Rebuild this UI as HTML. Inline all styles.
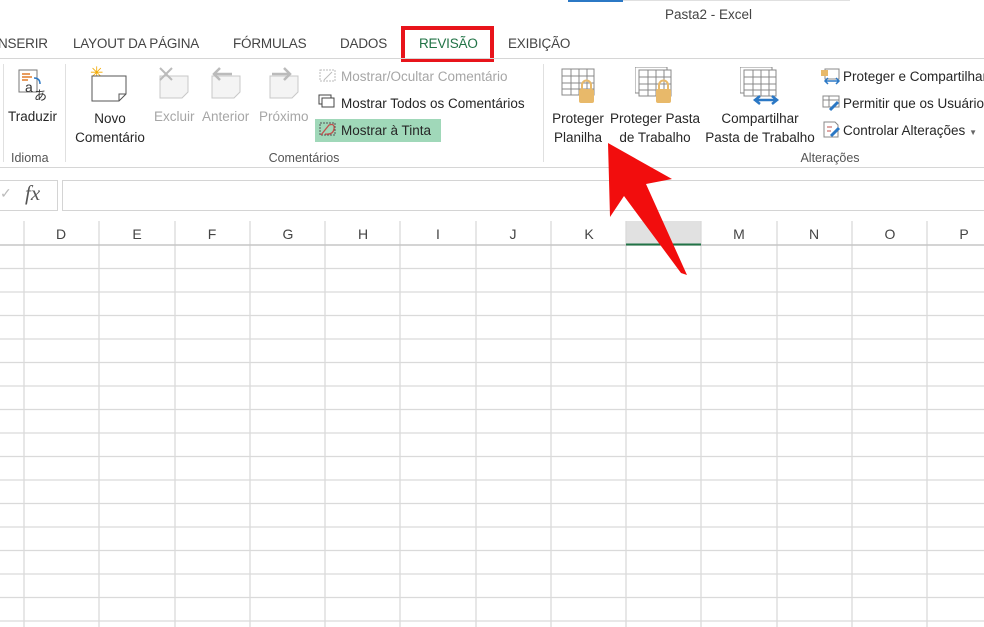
<!DOCTYPE html>
<html><head><meta charset="utf-8"><style>
body{margin:0;width:984px;height:627px;overflow:hidden;background:#fff;font-family:"Liberation Sans",sans-serif;position:relative;color:#262626}
.a{position:absolute;white-space:nowrap}
.t{font-size:13.5px;top:36px;color:#444;letter-spacing:-0.2px}
.r{font-size:13.5px}
.c{text-align:center}
.g{color:#a6a6a6}
.clip{position:absolute;left:0;top:0;width:984px;height:627px;overflow:hidden}
</style></head><body><div class="clip">
<div class="a" style="left:568px;top:0;width:55px;height:2px;background:#2b78c5"></div>
<div class="a" style="left:623px;top:0;width:227px;height:1px;background:#e0e0e0"></div>
<div class="a" style="left:665px;top:7px;font-size:13.5px;color:#444">Pasta2 - Excel</div>

<div class="a t" style="left:-2px">NSERIR</div>
<div class="a t" style="left:73px">LAYOUT DA PÁGINA</div>
<div class="a t" style="left:233px">FÓRMULAS</div>
<div class="a t" style="left:340px">DADOS</div>
<div class="a t" style="left:419px;color:#217346">REVISÃO</div>
<div class="a t" style="left:508px">EXIBIÇÃO</div>
<div class="a" style="left:401px;top:26px;width:85px;height:28px;border:4px solid #e8141b"></div>
<div class="a" style="left:0;top:58px;width:984px;height:1px;background:#d6d6d6"></div>
<div class="a" style="left:0;top:167px;width:984px;height:1px;background:#d6d6d6"></div>
<div class="a" style="left:65px;top:64px;width:1px;height:98px;background:#e0e0e0"></div>
<div class="a" style="left:543px;top:64px;width:1px;height:98px;background:#e0e0e0"></div>
<div class="a" style="left:3px;top:64px;width:1px;height:98px;background:#e0e0e0"></div>

<svg class="a" style="left:16px;top:68px" width="36" height="36"><rect x="3" y="2" width="18" height="22" fill="#fff" stroke="#777"/><path d="M6 6h8M6 9h10M6 12h6" stroke="#e07b2a" stroke-width="1.5"/><path d="M18 10q6 0 6 6" stroke="#2b78c5" fill="none" stroke-width="1.5"/><text x="9" y="24" font-size="14" fill="#333" font-family="Liberation Sans">a</text><text x="18" y="32" font-size="13" fill="#333" font-family="Noto Sans CJK JP">あ</text></svg>
<div class="a r" style="left:8px;top:109px">Traduzir</div>
<div class="a r" style="left:11px;top:151px;color:#555;font-size:12.5px">Idioma</div>

<svg class="a" style="left:88px;top:64px" width="44" height="40"><text x="2" y="14" font-size="16" fill="#f2a900">✳</text><path d="M4 12h34v18l-7 7H4z" fill="#fff" stroke="#555"/><path d="M31 37v-7h7" fill="none" stroke="#555"/></svg>
<div class="a r c" style="left:70px;top:109px;width:80px;line-height:19px">Novo<br>Comentário</div>
<svg class="a" style="left:156px;top:66px" width="36" height="36"><path d="M4 10h28v16l-6 6H4z" fill="#f4f4f4" stroke="#c8c8c8"/><path d="M4 2l12 12M16 2L4 14" stroke="#bbb" stroke-width="2"/></svg>
<svg class="a" style="left:208px;top:66px" width="36" height="36"><path d="M4 10h28v16l-6 6H4z" fill="#f4f4f4" stroke="#c8c8c8"/><path d="M24 8H6M12 2L6 8l6 6" fill="none" stroke="#bbb" stroke-width="2.5"/></svg>
<svg class="a" style="left:266px;top:66px" width="36" height="36"><path d="M4 10h28v16l-6 6H4z" fill="#f4f4f4" stroke="#c8c8c8"/><path d="M6 8h18M18 2l6 6-6 6" fill="none" stroke="#bbb" stroke-width="2.5"/></svg>
<div class="a r g" style="left:154px;top:109px">Excluir</div>
<div class="a r g" style="left:202px;top:109px">Anterior</div>
<div class="a r g" style="left:259px;top:109px">Próximo</div>

<div class="a" style="left:315px;top:119px;width:126px;height:23px;background:#a0d8b9"></div>
<svg class="a" style="left:318px;top:68px" width="20" height="72"><rect x="2" y="2" width="15" height="11" fill="none" stroke="#bbb" stroke-dasharray="2 1"/><path d="M6 12l8-8" stroke="#bbb"/><rect x="1" y="27" width="12" height="9" fill="none" stroke="#444"/><rect x="4" y="30" width="12" height="9" fill="#fff" stroke="#444"/><rect x="2" y="55" width="15" height="12" fill="none" stroke="#555" stroke-dasharray="2 1"/><path d="M3 67l8-10q6-2 5 4t-9 5" fill="none" stroke="#c0504d" stroke-width="1.3"/></svg>
<div class="a r g" style="left:341px;top:69px">Mostrar/Ocultar Comentário</div>
<div class="a r" style="left:341px;top:96px">Mostrar Todos os Comentários</div>
<div class="a r" style="left:341px;top:123px">Mostrar à Tinta</div>
<div class="a c" style="left:254px;top:151px;width:100px;font-size:12.5px;color:#555">Comentários</div>

<svg class="a" style="left:560px;top:67px" width="40" height="40"><g fill="none" stroke="#888"><rect x="2" y="2" width="32" height="26"/><path d="M2 9h32M2 16h32M2 22h32M11 2v26M19 2v26M27 2v26"/></g><rect x="19" y="22" width="15" height="14" rx="2" fill="#e8b96a"/><path d="M22 22v-4a4.5 4.5 0 0 1 9 0v4" fill="none" stroke="#e8b96a" stroke-width="2"/></svg>
<svg class="a" style="left:635px;top:67px" width="40" height="40"><rect x="0" y="0" width="32" height="26" fill="none" stroke="#888"/><g fill="#fff" stroke="#888"><rect x="4" y="3" width="32" height="26"/></g><path d="M4 10h32M4 17h32M4 23h32M13 3v26M21 3v26M29 3v26" stroke="#888" fill="none"/><rect x="21" y="22" width="15" height="14" rx="2" fill="#e8b96a"/><path d="M24 22v-4a4.5 4.5 0 0 1 9 0v4" fill="none" stroke="#e8b96a" stroke-width="2"/></svg>
<svg class="a" style="left:740px;top:67px" width="42" height="40"><rect x="0" y="0" width="32" height="26" fill="none" stroke="#888"/><rect x="4" y="3" width="32" height="26" fill="#fff" stroke="#888"/><path d="M4 10h32M4 17h32M4 23h32M13 3v26M21 3v26M29 3v26" stroke="#888" fill="none"/><path d="M16 33h20M20 29l-5 4 5 4M32 29l5 4-5 4" fill="none" stroke="#2b78c5" stroke-width="2.5"/></svg>
<div class="a r c" style="left:543px;top:109px;width:70px;line-height:19px">Proteger<br>Planilha</div>
<div class="a r c" style="left:607px;top:109px;width:96px;line-height:19px">Proteger Pasta<br>de Trabalho</div>
<div class="a r c" style="left:702px;top:109px;width:116px;line-height:19px">Compartilhar<br>Pasta de Trabalho</div>
<svg class="a" style="left:820px;top:66px" width="22" height="74"><rect x="5" y="3" width="14" height="10" fill="none" stroke="#888"/><rect x="1" y="4" width="7" height="6" fill="#e8b96a"/><path d="M5 15h14M8 12l-3 3 3 3M16 12l3 3-3 3" stroke="#2b78c5" fill="none" stroke-width="1.5"/><rect x="3" y="30" width="16" height="11" fill="none" stroke="#888"/><path d="M3 34h16M9 30v11" stroke="#888"/><path d="M10 44l8-8" stroke="#2b78c5" stroke-width="3"/><path d="M4 56h11l3 3v12H4z" fill="none" stroke="#888"/><path d="M7 61h5M7 65h4" stroke="#c0504d"/><path d="M11 70l8-8" stroke="#2b78c5" stroke-width="3"/></svg>
<div class="a r" style="left:843px;top:69px">Proteger e Compartilhar</div>
<div class="a r" style="left:843px;top:96px">Permitir que os Usuários</div>
<div class="a r" style="left:843px;top:123px">Controlar Alterações <span style="font-size:8px;color:#666">▼</span></div>
<div class="a c" style="left:780px;top:151px;width:100px;font-size:12.5px;color:#555">Alterações</div>

<div class="a" style="left:-2px;top:180px;width:58px;height:29px;border:1px solid #d4d4d4"></div>
<div class="a" style="left:0;top:185px;color:#bbb;font-size:14px">✓</div>
<div class="a" style="left:25px;top:181px;font-family:'Liberation Serif',serif;font-style:italic;font-size:21px;color:#555">fx</div>
<div class="a" style="left:62px;top:180px;width:930px;height:29px;border:1px solid #d4d4d4"></div>

<svg class="a" style="left:0;top:215px" width="984" height="412">
<rect x="626" y="6" width="75" height="24" fill="#e1e1e1"/>
<g stroke="#dadada" stroke-width="1.3">
<path d="M24 6V412M99 6V412M175 6V412M250 6V412M325 6V412M400 6V412M476 6V412M551 6V412M626 6V412M701 6V412M777 6V412M852 6V412M927 6V412"/>
<path d="M0 53.5H984M0 77H984M0 100.5H984M0 124H984M0 147.5H984M0 171H984M0 194.5H984M0 218H984M0 241.5H984M0 265H984M0 288.5H984M0 312H984M0 335.5H984M0 359H984M0 382.5H984M0 406H984"/>
</g>
<path d="M0 30H984" stroke="#c6c6c6" stroke-width="1.5"/>
<path d="M626 29.5H701" stroke="#217346" stroke-width="2"/>
<g font-family="Liberation Sans" font-size="14" fill="#444" text-anchor="middle">
<text x="61" y="24">D</text><text x="137" y="24">E</text><text x="212" y="24">F</text><text x="288" y="24">G</text><text x="363" y="24">H</text><text x="438" y="24">I</text><text x="513" y="24">J</text><text x="589" y="24">K</text><text x="739" y="24">M</text><text x="814" y="24">N</text><text x="890" y="24">O</text><text x="964" y="24">P</text>
</g>
</svg>

<svg class="a" style="left:0;top:0" width="984" height="627"><polygon points="608,143 672,179 646,184 687,275 681,273 624,196 610,217" fill="#f20d0d"/></svg>
</div></body></html>
